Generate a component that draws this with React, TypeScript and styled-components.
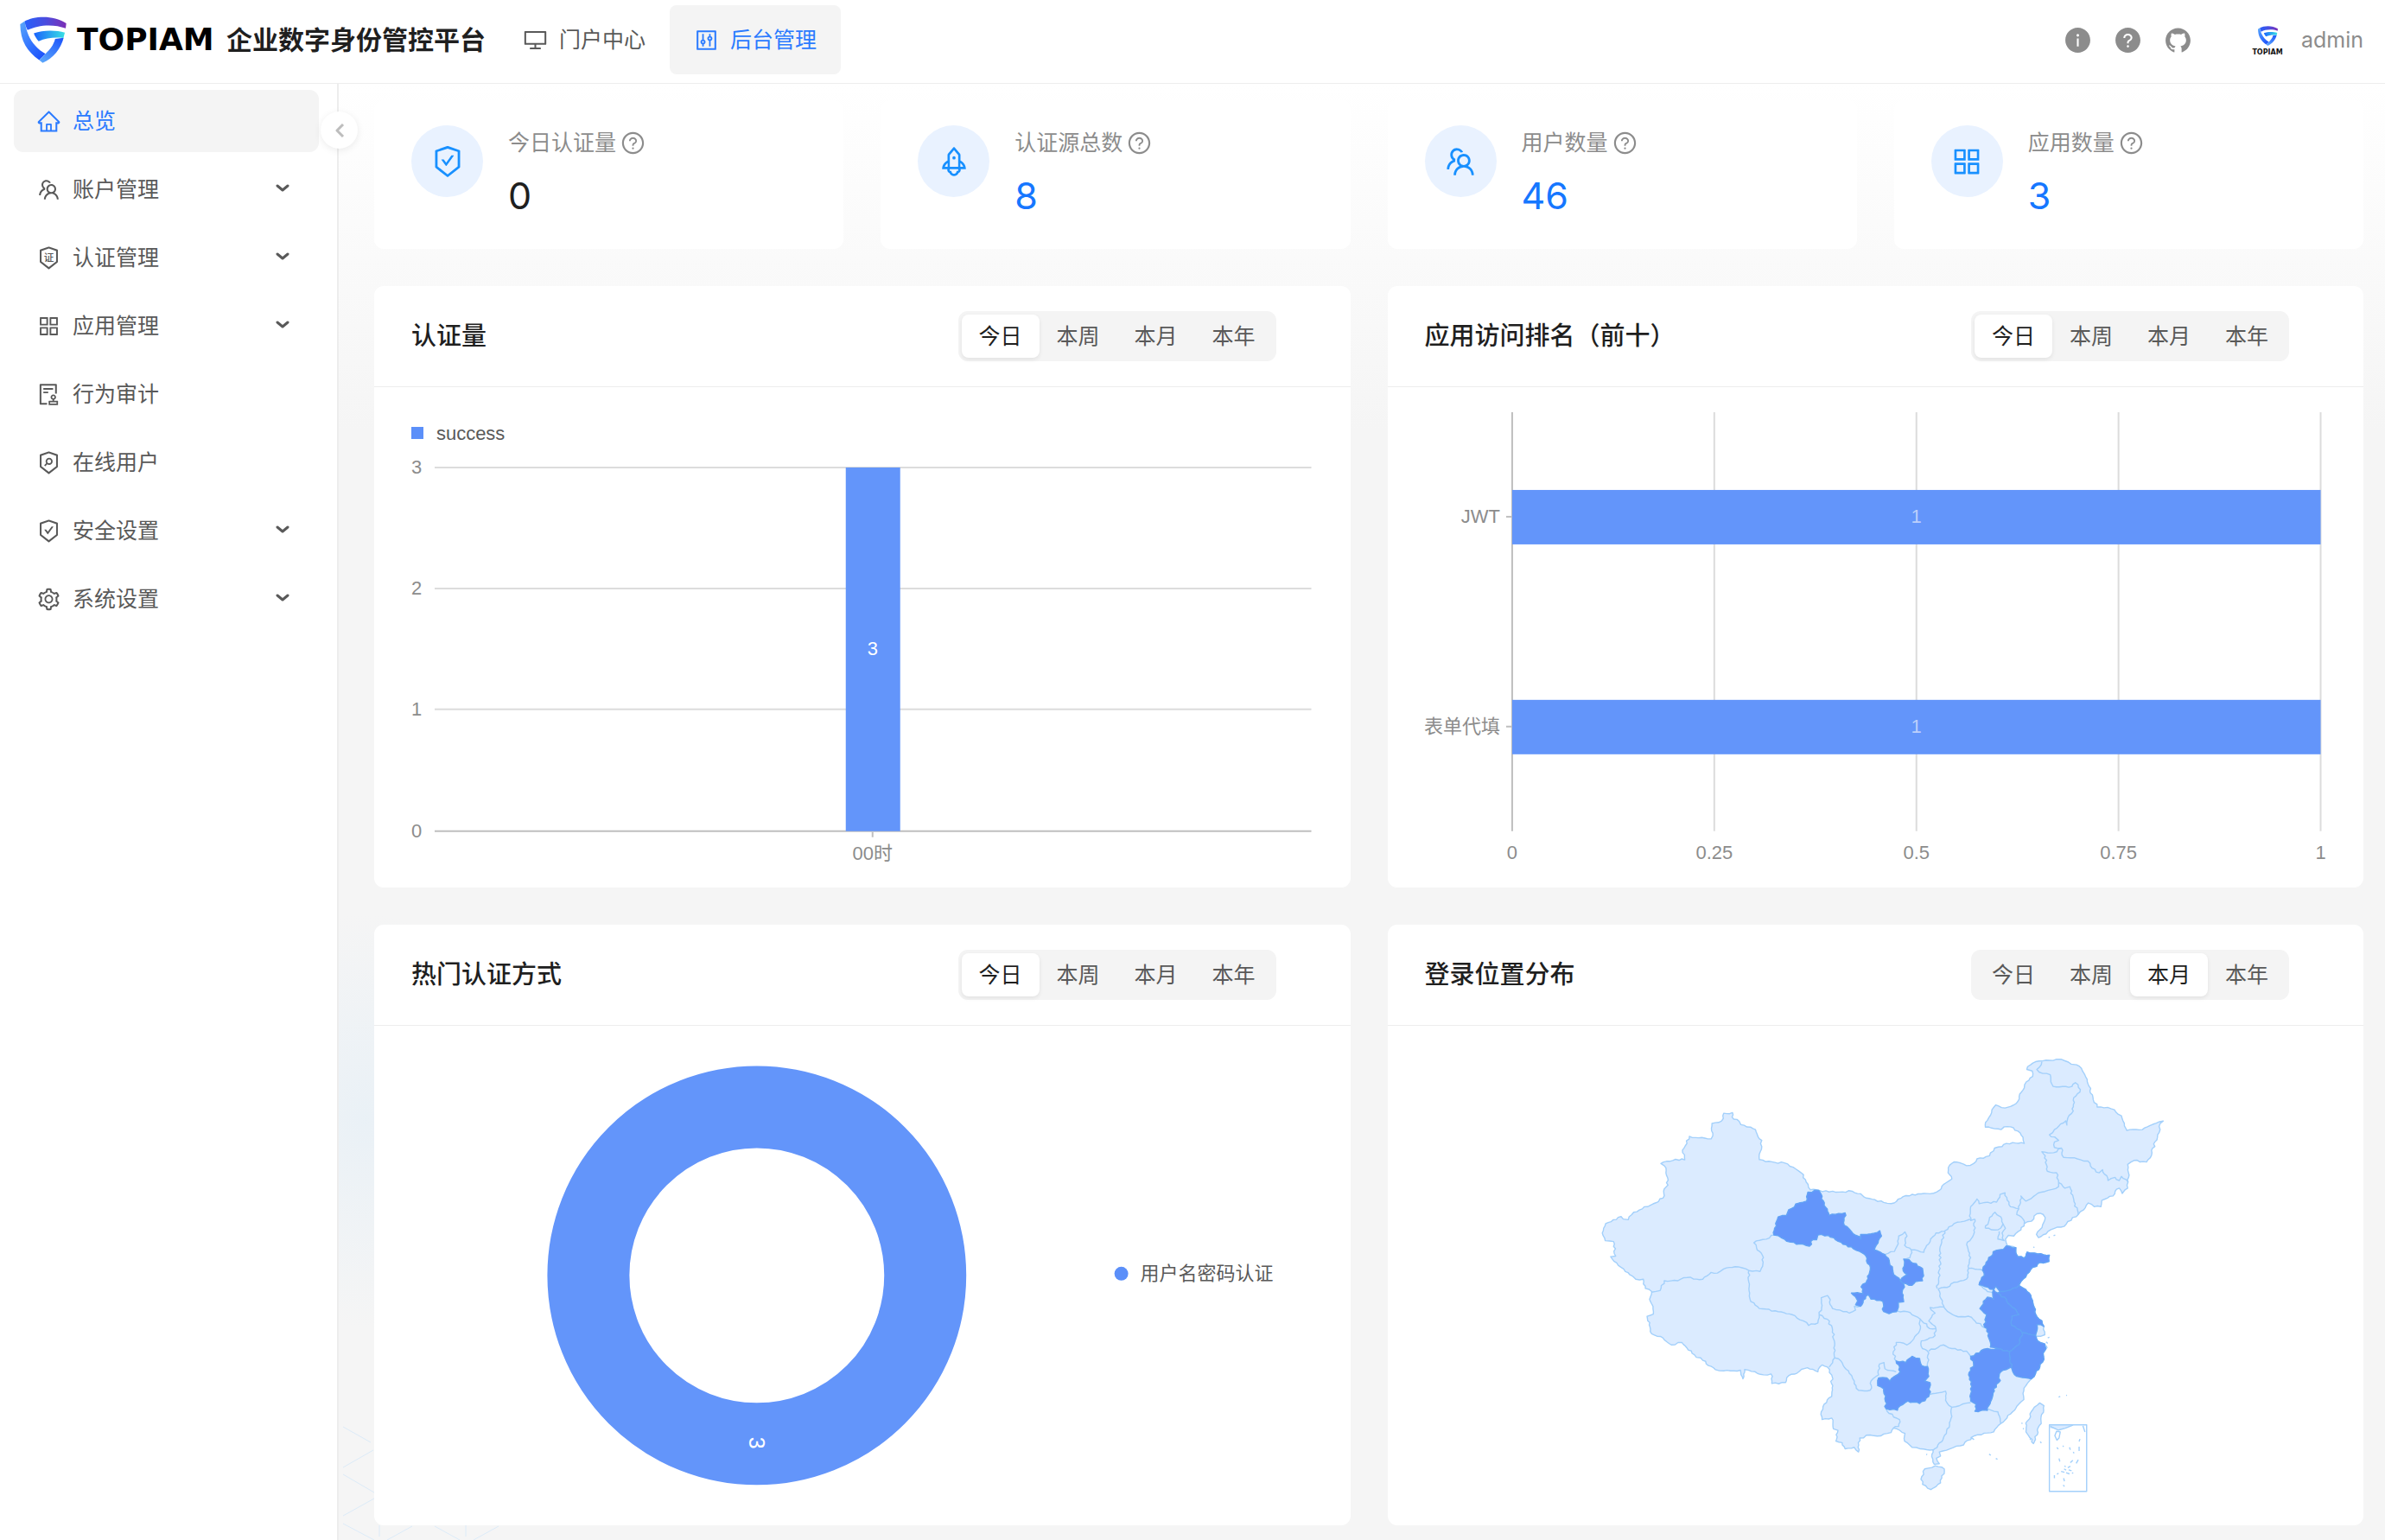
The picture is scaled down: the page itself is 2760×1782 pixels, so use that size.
import React, { useState } from 'react';
import styled, { createGlobalStyle } from 'styled-components';
import {
  AiFillGithub,
  AiFillInfoCircle,
  AiFillQuestionCircle,
  AiOutlineAppstore,
  AiOutlineAudit,
  AiOutlineControl,
  AiOutlineDesktop,
  AiOutlineHome,
  AiOutlineQuestionCircle,
  AiOutlineRocket,
  AiOutlineSafetyCertificate,
  AiOutlineSecurityScan,
  AiOutlineSetting,
  AiOutlineTeam,
} from 'react-icons/ai';

const color = {
  primary: '#2b7bff',
  number: '#1677ff',
  icon: '#1890ff',
  iconBg: '#e9f2ff',
  title: '#1f1f1f',
  text: '#595959',
  muted: '#8c8c8c',
  line: '#ededed',
  fill: '#f4f4f4',
  bar: '#6395fa',
  legend: '#5b8ff9',
  grid: '#dcdcdc',
  axis: '#bfbfbf',
};

const uiFont = `Inter, 'Noto Sans CJK SC', sans-serif`;
const chartFont = `'Liberation Sans', 'Noto Sans CJK SC', sans-serif`;

const GlobalStyle = createGlobalStyle`
  *, *::before, *::after { box-sizing: border-box; }
  body { margin: 0; background: #fff; font-family: ${uiFont}; color: ${color.title}; }
  button { font: inherit; border: 0; background: none; padding: 0; cursor: pointer; }
  a { text-decoration: none; color: inherit; }
  h1, h2, p, ul { margin: 0; padding: 0; }
  ul { list-style: none; }
  svg { display: block; flex: none; }
`;

/* ---------- shell ---------- */

const Page = styled.div`
  display: flex;
  flex-direction: column;
  min-height: 100vh;
`;

const Header = styled.header`
  display: flex;
  align-items: center;
  height: 97px;
  padding: 0 25px 4px 23px;
  border-bottom: 1px solid ${color.line};
  background: #fff;
`;

const Brand = styled.a`
  display: flex;
  align-items: center;
  margin-right: 15px;
`;

const Wordmark = styled.span`
  width: 172px;
  padding-left: 12px;
  font: 700 36px/48px 'DejaVu Sans', sans-serif;
  color: #000;
`;

const BrandTitle = styled.h1`
  padding-left: 13px;
  font-size: 30px;
  line-height: 48px;
  font-weight: 600;
  white-space: nowrap;
`;

const TopNav = styled.nav`
  display: flex;
  flex: 1;
`;

const TopLink = styled.a<{ $active?: boolean }>`
  display: flex;
  align-items: center;
  gap: 13px;
  height: 80px;
  padding: 0 28px;
  border-radius: 8px;
  font-size: 25px;
  line-height: 40px;
  white-space: nowrap;
  color: ${(p) => (p.$active ? color.primary : color.text)};
  background: ${(p) => (p.$active ? color.fill : 'transparent')};
`;

const Tools = styled.div`
  display: flex;
  align-items: center;
  gap: 25px;
  margin-right: 66px;
`;

const ToolButton = styled.button`
  color: ${color.muted};
`;

const Account = styled.button`
  display: flex;
  align-items: center;
  gap: 17px;
  font-size: 25px;
  line-height: 40px;
  color: ${color.muted};
`;

const Body = styled.div`
  display: flex;
  flex: 1;
`;

const Sidebar = styled.aside`
  position: relative;
  flex: none;
  width: 392px;
  padding: 7px 21px 0 16px;
  border-right: 2px solid ${color.line};
  background: #fff;
`;

const Menu = styled.ul`
  display: flex;
  flex-direction: column;
  gap: 7px;
`;

const MenuLink = styled.a<{ $active?: boolean }>`
  display: flex;
  align-items: center;
  gap: 13px;
  height: 72px;
  padding: 0 34px 0 26px;
  border-radius: 11px;
  font-size: 25px;
  line-height: 40px;
  color: ${(p) => (p.$active ? color.primary : color.text)};
  background: ${(p) => (p.$active ? color.fill : 'transparent')};
`;

const MenuLabel = styled.span`
  flex: 1;
`;

const Collapse = styled.button`
  position: absolute;
  z-index: 1;
  top: 32px;
  right: -24px;
  display: grid;
  place-items: center;
  width: 43px;
  height: 43px;
  border-radius: 50%;
  background: #fff;
  color: #bdbdbd;
  box-shadow: 0 2px 8px rgba(0, 0, 0, 0.08);
`;

const Main = styled.main`
  position: relative;
  flex: 1;
  min-width: 0;
  display: flex;
  flex-direction: column;
  gap: 43px;
  padding: 19px 25px 16px 41px;
  background:
    radial-gradient(ellipse 180px 240px at 30px 1200px, rgba(226, 238, 247, 0.6), rgba(226, 238, 247, 0) 100%),
    linear-gradient(180deg, #ffffff 0, #f5f5f5 400px);
`;

const Pattern = styled.svg`
  position: absolute;
  left: 0;
  bottom: 0;
`;

const Row = styled.section<{ $columns: number }>`
  position: relative;
  display: grid;
  grid-template-columns: repeat(${(p) => p.$columns}, minmax(0, 1fr));
  gap: 43px;
`;

/* ---------- cards ---------- */

const StatCard = styled.article`
  display: flex;
  gap: 29px;
  height: 172px;
  padding: 29px 43px;
  border-radius: 11px;
  background: #fff;
`;

const StatIcon = styled.div`
  display: grid;
  place-items: center;
  flex: none;
  width: 83px;
  height: 83px;
  border-radius: 50%;
  background: ${color.iconBg};
  color: ${color.icon};
`;

const StatTitle = styled.div`
  display: flex;
  align-items: center;
  gap: 5px;
  font-size: 25px;
  line-height: 40px;
  white-space: nowrap;
  color: ${color.muted};
`;

const StatValue = styled.p<{ $plain?: boolean }>`
  padding-top: 13px;
  font-size: 43px;
  line-height: 56px;
  color: ${(p) => (p.$plain ? color.title : color.number)};
`;

const ChartCard = styled.article`
  border-radius: 11px;
  background: #fff;
  overflow: hidden;
`;

const ChartHeader = styled.header`
  display: flex;
  align-items: center;
  justify-content: space-between;
  height: 117px;
  padding: 0 86px 0 43px;
  border-bottom: 1px solid ${color.line};
`;

const ChartTitle = styled.h2`
  font-size: 29px;
  line-height: 44px;
  font-weight: 500;
`;

const Segmented = styled.div`
  display: flex;
  padding: 4px;
  border-radius: 11px;
  background: ${color.fill};
`;

const Segment = styled.button<{ $active: boolean }>`
  width: 90px;
  height: 50px;
  border-radius: 8px;
  font-size: 25px;
  line-height: 50px;
  color: ${(p) => (p.$active ? color.title : color.text)};
  background: ${(p) => (p.$active ? '#fff' : 'transparent')};
  box-shadow: ${(p) => (p.$active ? '0 2px 5px rgba(0, 0, 0, 0.08)' : 'none')};
`;

const Chart = styled.svg`
  width: 100%;
  height: auto;
  font-family: ${chartFont};
  font-size: 22px;
  fill: ${color.muted};
`;

/* ---------- icons ---------- */

const Logo = ({ id, width, height }: { id: string; width: number; height: number }) => (
  <svg width={width} height={height} viewBox="68 56 164 162" aria-hidden="true">
    <defs>
      <linearGradient id={`${id}-top`} x1="0" x2="1">
        <stop offset="0" stopColor="#2860fb" />
        <stop offset="0.5" stopColor="#4a4ddf" />
        <stop offset="1" stopColor="#7d2fb5" />
      </linearGradient>
      <linearGradient id={`${id}-left`} x1="0" y1="0" x2="0.7" y2="1">
        <stop offset="0" stopColor="#5aa8fa" />
        <stop offset="0.5" stopColor="#3a7dff" />
        <stop offset="1" stopColor="#1f55fb" />
      </linearGradient>
      <linearGradient id={`${id}-right`} x1="0.8" y1="0" x2="0.2" y2="1">
        <stop offset="0" stopColor="#1f58fb" />
        <stop offset="1" stopColor="#5aa5fb" />
      </linearGradient>
      <linearGradient id={`${id}-mid`} x1="0" x2="1">
        <stop offset="0" stopColor="#1b62fd" />
        <stop offset="1" stopColor="#37e0e4" />
      </linearGradient>
    </defs>
    <path fill={`url(#${id}-left)`} d="M69 82 85 72C88 92 92 105 98 120C110 148 132 172 158 186L136 208C94 178 70 142 69 82Z" />
    <path fill={`url(#${id}-right)`} d="M192 134 222 130C212 168 186 202 148 218L136 208L158 186C174 172 186 156 192 134Z" />
    <path fill={`url(#${id}-top)`} d="M85 72C115 54 185 48 231 79L229 97C186 80 130 85 95 103C90 94 86 84 85 72Z" />
    <path fill={`url(#${id}-mid)`} d="M117 114C150 102 195 102 226 112L221 131C192 127 160 131 134 142C127 134 120 124 117 114Z" />
  </svg>
);

const Avatar = () => (
  <svg width="43" height="43" viewBox="0 0 43 43" aria-hidden="true">
    <svg x="9" y="5" width="25" height="23" viewBox="0 0 25 23">
      <Logo id="avatar" width={25} height={23} />
    </svg>
    <text x="21" y="38" textAnchor="middle" fontFamily="DejaVu Sans, sans-serif" fontSize="8" fontWeight="700" fill="#111">
      TOPIAM
    </text>
  </svg>
);

const CertIcon = () => (
  <svg width="29" height="29" viewBox="0 0 1024 1024" fill="currentColor" aria-hidden="true">
    <path d="M866.9 169.9L527.1 54.1C523 52.7 517.5 52 512 52s-11 .7-15.1 2.1L157.1 169.9c-8.3 2.8-15.1 12.4-15.1 21.2v482.4c0 8.8 5.7 20.4 12.6 25.9L499.3 968c3.5 2.7 8 4.1 12.6 4.1s9.2-1.4 12.6-4.1l344.7-268.6c6.9-5.4 12.6-17 12.6-25.9V191.1c.2-8.8-6.6-18.3-14.9-21.2zM810 654.3L512 886.5 214 654.3V226.7l298-101.6 298 101.6v427.6z" />
    <text x="512" y="632" textAnchor="middle" fontFamily="Noto Sans CJK SC, sans-serif" fontSize="410" fontWeight="500">
      证
    </text>
  </svg>
);

const ChevronDown = () => (
  <svg width="16" height="16" viewBox="0 0 16 16" aria-hidden="true">
    <path d="M2 4l6 5 6-5" fill="none" stroke="currentColor" strokeWidth="3" strokeLinecap="round" strokeLinejoin="round" />
  </svg>
);

const ChevronLeft = () => (
  <svg width="16" height="16" viewBox="0 0 16 16" aria-hidden="true">
    <path d="M12 1L5 8l7 7" fill="none" stroke="currentColor" strokeWidth="3" strokeLinejoin="round" />
  </svg>
);

/* ---------- charts ---------- */

const AuthBarChart = () => {
  const ticks = [3, 2, 1, 0];
  const left = 70;
  const right = 1085;
  const base = 514;
  const step = 140;
  return (
    <Chart viewBox="0 0 1130 579" role="img" aria-label="认证量">
      <rect x="43" y="46" width="14" height="14" fill={color.legend} />
      <text x="72" y="61" fill={color.text}>success</text>
      {ticks.map((t) => {
        const y = base - t * step - (t === 0 ? 0 : 1);
        return (
          <g key={t}>
            <text x="43" y={y + 7}>{t}</text>
            <path d={`M${left} ${y}H${right}`} stroke={t === 0 ? color.axis : color.grid} strokeWidth="2" />
          </g>
        );
      })}
      <rect x="546" y="93" width="63" height="421" fill={color.bar} />
      <path d="M577 515v6" stroke={color.axis} strokeWidth="2" />
      <text x="577" y="310" textAnchor="middle" fill="#fff">3</text>
      <text x="577" y="547" textAnchor="middle">00时</text>
    </Chart>
  );
};

const AppRankChart = () => {
  const left = 144;
  const width = 936;
  const ticks = [0, 0.25, 0.5, 0.75, 1];
  const rows = [
    { name: 'JWT', y: 150 },
    { name: '表单代填', y: 393 },
  ];
  return (
    <Chart viewBox="0 0 1130 579" role="img" aria-label="应用访问排名">
      {ticks.map((t) => (
        <g key={t}>
          <path d={`M${left + t * width} 29V514`} stroke={t === 0 ? color.axis : color.grid} strokeWidth="2" />
          <text x={left + t * width} y="546" textAnchor="middle">{t}</text>
        </g>
      ))}
      {rows.map((r) => (
        <g key={r.name}>
          <path d={`M${left - 7} ${r.y}h7`} stroke={color.axis} strokeWidth="2" />
          <rect x={left} y={r.y - 31} width={width} height="63" fill={color.bar} />
          <text x={left - 14} y={r.y + 7} textAnchor="end">{r.name}</text>
          <text x={left + width / 2} y={r.y + 7} textAnchor="middle" fill="#bccffb">1</text>
        </g>
      ))}
    </Chart>
  );
};

const AuthDonutChart = () => (
  <Chart viewBox="0 0 1130 579" role="img" aria-label="热门认证方式">
    <circle cx="443" cy="289" r="195" fill="none" stroke={color.bar} strokeWidth="95" />
    <text x="443" y="483" transform="rotate(90 443 483)" dy="9" textAnchor="middle" fontSize="25" fill="#fff">3</text>
    <circle cx="865" cy="287" r="8" fill={color.legend} />
    <text x="887" y="294" fill={color.text}>用户名密码认证</text>
  </Chart>
);

/* Bends every long segment at repeatable points so borders look like surveyed
   lines; neighbours that share a segment get the same bends. */
const survey = (src: string, closed: boolean) => {
  const pts = src.trim().split(/\s+/).map((p) => p.split(',').map(Number) as [number, number]);
  const noise = (n: number) => {
    const s = Math.sin(n * 12.9898) * 43758.5453;
    return (s - Math.floor(s)) * 2 - 1;
  };
  const out: string[] = [];
  const count = closed ? pts.length : pts.length - 1;
  for (let i = 0; i < count; i += 1) {
    const a = pts[i];
    const b = pts[(i + 1) % pts.length];
    out.push(`${a[0]} ${a[1]}`);
    const flip = a[0] > b[0] || (a[0] === b[0] && a[1] > b[1]);
    const [p, q] = flip ? [b, a] : [a, b];
    const dx = q[0] - p[0];
    const dy = q[1] - p[1];
    const len = Math.hypot(dx, dy);
    const parts = Math.floor(len / 7);
    const mids: string[] = [];
    for (let k = 1; k < parts; k += 1) {
      const t = k / parts;
      const d = noise(p[0] + p[1] * 3 + k * 7) * 3;
      mids.push(`${(p[0] + dx * t - (dy / len) * d).toFixed(1)} ${(p[1] + dy * t + (dx / len) * d).toFixed(1)}`);
    }
    if (flip) mids.reverse();
    out.push(...mids);
  }
  if (!closed) out.push(pts[pts.length - 1].join(' '));
  return `M${out.join('L')}${closed ? 'Z' : ''}`;
};

const land = [
  `400,247 421,245 424,266 437,273 441,284 464,292 476,300 480,315 491,335 491,355 485,380 485,397 500,404 545,408 566,422
   585,440 597,470 607,495 628,497 668,503 707,500 727,508 734,517 782,536 800,540 823,523 850,510 893,508 915,497 925,478
   945,460 936,440 940,415 950,405 980,417 997,410 1005,395 1020,393 1035,385 1047,360 1065,355 1075,345 1090,342 1118,345
   1115,325 1103,305 1085,291 1070,291 1063,300 1040,295 1025,292 1030,270 1040,245 1050,220 1072,230 1085,225 1103,208
   1107,185 1118,165 1123,145 1138,128 1137,110 1124,105 1133,90 1145,80 1170,75 1195,72 1215,77 1230,88 1243,90 1257,110
   1265,130 1273,160 1282,195 1292,227 1325,232 1350,255 1357,280 1363,303 1400,300 1425,283 1450,272 1440,290 1440,310
   1430,340 1423,375 1410,405 1380,400 1365,413 1367,440 1366,470 1365,490 1352,507 1345,490 1335,500 1330,515 1303,530
   1301,550 1285,550 1271,538 1260,560 1247,575 1222,598 1213,614 1190,620 1170,638 1152,650 1147,640 1155,625 1165,600
   1168,585 1163,575 1148,573 1135,597 1118,605 1110,625 1093,645 1080,643 1073,655 1077,675 1098,683 1103,712 1117,717
   1125,697 1150,703 1178,707 1177,727 1150,735 1130,762 1115,785 1105,805 1130,830 1140,870 1145,898 1160,920 1165,938
   1167,965 1148,970 1150,985 1167,995 1170,1010 1163,1025 1165,1045 1155,1070 1145,1090 1135,1108 1122,1130 1115,1155
   1117,1175 1105,1190 1090,1215 1062,1253 1045,1280 1000,1292 990,1305 965,1325 940,1335 915,1345 918,1358 908,1365
   915,1383 903,1385 897,1360 900,1338 870,1335 850,1330 832,1310 833,1285 805,1268 800,1282 775,1293 750,1290 725,1300
   722,1345 712,1330 690,1335 683,1315 668,1310 673,1275 662,1270 658,1235 635,1240 633,1215 640,1190 658,1165 658,1095
   648,1070 635,1063 625,1085 600,1072 555,1098 548,1120 515,1123 513,1092 495,1095 475,1085 450,1078 446,1108 440,1080
   400,1082 380,1078 350,1048 330,1030 300,990 275,998 255,975 228,962 224,940 217,905 232,898 228,865 223,850 228,825
   213,815 208,785 190,785 165,760 148,740 130,712 142,710 137,663 117,660 110,635 118,605 155,582 160,590 172,592
   185,568 225,545 255,522 258,492 267,480 262,440 258,417 250,410 300,395 307,398 302,375 318,322 370,330 374,320
   372,280 395,272 398,255`,
  `880,1400 905,1390 927,1400 918,1445 895,1467 875,1450 873,1425`,
  `1155,1186 1165,1195 1158,1245 1140,1318 1122,1280 1125,1245 1142,1200`,
];

const borders = [
  `522,642 472,667 480,690 495,715 490,750 487,760 460,757`,
  `460,757 435,745 400,752 385,765 370,763 350,785 305,780 290,790 258,790 248,822 228,827`,
  `460,757 462,830 463,850 485,880 530,890 570,903 590,920 603,935 625,927 628,900`,
  `628,900 648,915 660,950 665,1000 665,1040 652,1070`,
  `628,900 635,870 633,845 648,838 660,880 685,890 700,895 715,885 712,873 727,872`,
  `785,705 808,695 817,670 818,645 833,632 838,645 832,675 848,690 845,715 830,722`,
  `848,690 878,698 890,670 907,635 928,630`,
  `928,628 917,680 917,750 910,815`,
  `928,628 950,605 975,597 990,590`,
  `1000,590 997,640 982,665 990,715 985,750`,
  `1000,590 990,595 990,550 1005,525 1010,540 1052,535 1060,510 1072,505 1085,550 1105,557`,
  `1105,557 1100,575 1115,590 1118,605`,
  `1105,557 1110,515 1122,532 1145,512 1175,497 1200,485 1200,472`,
  `1200,472 1215,490 1227,485 1235,520 1247,575`,
  `1200,472 1195,440 1173,435 1168,385 1160,372 1188,375 1207,360`,
  `1207,360 1212,390 1245,395 1270,402 1280,425 1297,440 1305,430 1318,465 1335,455 1345,465 1350,452 1366,470`,
  `1207,360 1190,358 1190,340 1200,335 1178,317 1190,300 1217,272 1220,285 1222,262 1235,240 1235,205 1252,170 1240,148 1232,160 1187,160 1180,122 1162,118 1148,105 1160,80`,
  `985,750 1020,757`,
  `985,750 980,785 950,795 940,808 912,817`,
  `1025,620 1035,585 1048,568 1062,583 1067,605 1055,625 1025,620`,
  `1067,605 1073,620 1065,635 1070,660 1055,655 1058,630`,
  `912,817 925,870 935,890 960,907 985,905 1000,920 1023,942`,
  `1010,803 1030,825 1045,830`,
  `925,875 893,877 905,895 890,920 907,945`,
  `815,888 845,893 870,915 870,945 850,985 838,998 812,990 805,1020 812,1050`,
  `870,915 885,930 892,945 907,945 905,968 872,985 875,1010 890,1025 887,1068`,
  `890,1018 925,998 945,1010 980,1018 990,1035`,
  `890,1160 930,1148 933,1185 945,1200 970,1190 990,1185`,
  `945,1200 945,1230 932,1285 910,1330 900,1340`,
  `1030,1205 1055,1215 1062,1253`,
  `665,1040 680,1050 700,1090 712,1115 722,1145 750,1145 752,1115 770,1095 772,1060 783,1055 785,1075 812,1085`,
  `788,1205 795,1220 820,1240 818,1262 805,1268`,
  `1148,932 1145,967`,
];

const active = [
  `601,503 627,497 640,545 652,578 690,570 688,610 705,630 728,655 727,640 752,638 773,628 777,645 760,690 785,705
   803,745 806,770 822,790 832,810 826,830 830,858 817,860 813,890 795,897 782,890 780,857 752,850 745,835 727,873
   715,868 720,855 705,830 733,832 728,810 740,797 750,755 740,710 725,695 705,680 685,672 650,643 625,642 622,657
   613,657 605,678 560,665 537,650 520,642 530,583 550,578 555,560 580,538 598,532`,
  `830,720 843,722 875,750 875,790 858,793 850,805 828,798 822,790 838,770 828,750`,
  `1075,677 1098,683 1103,712 1117,717 1125,697 1150,703 1178,707 1177,727 1150,735 1130,762 1115,785 1105,805
   1085,820 1060,825 1050,808 1045,818 1010,803 1022,765 1020,745 1033,715 1050,692 1068,688`,
  `1105,805 1130,830 1140,870 1145,898 1160,920 1165,938 1148,932 1145,967 1113,958 1088,935 1088,905 1105,900
   1085,870 1075,850 1055,830 1060,825 1085,820`,
  `1045,818 1055,830 1075,850 1085,870 1105,900 1088,905 1088,935 1113,958 1108,990 1083,1020 1055,1010 1037,1005
   1033,960 1023,940 1028,900 1012,880 1030,843 1045,850`,
  `1113,958 1145,967 1150,985 1167,995 1170,1010 1163,1025 1165,1045 1155,1070 1145,1090 1135,1108 1100,1100
   1087,1070 1083,1020 1108,990`,
  `990,1035 1030,1010 1055,1010 1083,1020 1087,1070 1062,1085 1057,1120 1045,1140 1040,1175 1030,1210 1000,1213
   1003,1190 990,1180 990,1125 985,1095 997,1060`,
  `812,1050 835,1055 850,1035 868,1042 873,1065 887,1068 890,1100 880,1115 893,1120 890,1165 868,1188 840,1180
   822,1195 815,1210 788,1205 785,1172 782,1140 768,1130 770,1105 790,1105 797,1115 808,1100 822,1085`,
];

const islets = `M1188 644l4-2M1176 650l3-2M1140 680l2 3M1174 975l4-2M1170 988l4 5M1170 1000l3 8M1200 1167l4-2M1218 1161l2 1
  M1112 1250l1 4M1156 1312l3 4M1034 1352l4 4M1050 1366l4 3M884 1352l2 2M990 1297l8 8M1132 1302l1 4M1115 1268l2 3`;
const inset = `M1180 1262l20 12l16-6l18-10M1191 1292l4-14l9 2l-3 20l-5 7zM1258 1260l5 20M1251 1303l-2 8M1249 1328v14M1247 1370l-5 12
  M1196 1330l3 6M1210 1325l2 3M1226 1330l2 8M1201 1366l2 10M1228 1380l6-8M1213 1400l5 4M1206 1408l8 3M1222 1396l6-5M1218 1412l8 4
  M1224 1403l7 3M1190 1420v10M1212 1430l2 10M1211 1452l3 5M1235 1345l2 4M1196 1417l4-3M1232 1412l3 2M1214 1390l3 3`;

const LocationMap = () => (
  <Chart viewBox="0 0 1130 579" role="img" aria-label="登录位置分布">
    <g transform="translate(195 13) scale(0.48469 0.35714)" stroke="#a3d0fb" strokeWidth="1.4" strokeLinejoin="round" fill="none">
      {land.map((d) => (
        <path key={d} d={survey(d, true)} fill="#dbebff" vectorEffect="non-scaling-stroke" />
      ))}
      {borders.map((d) => (
        <path key={d} d={survey(d, false)} vectorEffect="non-scaling-stroke" />
      ))}
      {active.map((d) => (
        <path key={d} d={survey(d, true)} fill={color.bar} stroke="#62a3f5" vectorEffect="non-scaling-stroke" />
      ))}
      <path d={islets} vectorEffect="non-scaling-stroke" />
      <path d="M1178 1257H1240L1205 1272L1180 1268Z" fill="#dbebff" stroke="none" />
      <path d={inset} vectorEffect="non-scaling-stroke" />
      <rect x="1178" y="1257" width="89" height="216" vectorEffect="non-scaling-stroke" />
    </g>
  </Chart>
);

/* ---------- page ---------- */

const ranges = ['今日', '本周', '本月', '本年'];

const menu = [
  { label: '总览', icon: <AiOutlineHome size={29} />, active: true },
  { label: '账户管理', icon: <AiOutlineTeam size={29} />, nested: true },
  { label: '认证管理', icon: <CertIcon />, nested: true },
  { label: '应用管理', icon: <AiOutlineAppstore size={29} />, nested: true },
  { label: '行为审计', icon: <AiOutlineAudit size={29} /> },
  { label: '在线用户', icon: <AiOutlineSecurityScan size={29} /> },
  { label: '安全设置', icon: <AiOutlineSafetyCertificate size={29} />, nested: true },
  { label: '系统设置', icon: <AiOutlineSetting size={29} />, nested: true },
];

const stats = [
  { label: '今日认证量', value: 0, icon: <AiOutlineSafetyCertificate size={40} /> },
  { label: '认证源总数', value: 8, icon: <AiOutlineRocket size={40} /> },
  { label: '用户数量', value: 46, icon: <AiOutlineTeam size={40} /> },
  { label: '应用数量', value: 3, icon: <AiOutlineAppstore size={40} /> },
];

type PanelProps = { title: string; initial?: string; children: React.ReactNode };

const Panel = ({ title, initial = '今日', children }: PanelProps) => {
  const [range, setRange] = useState(initial);
  return (
    <ChartCard>
      <ChartHeader>
        <ChartTitle>{title}</ChartTitle>
        <Segmented role="group" aria-label={title}>
          {ranges.map((r) => (
            <Segment key={r} type="button" $active={r === range} aria-pressed={r === range} onClick={() => setRange(r)}>
              {r}
            </Segment>
          ))}
        </Segmented>
      </ChartHeader>
      {children}
    </ChartCard>
  );
};

export default function App() {
  return (
    <Page>
      <GlobalStyle />
      <Header>
        <Brand href="#home">
          <Logo id="brand" width={54} height={54} />
          <Wordmark>TOPIAM</Wordmark>
          <BrandTitle>企业数字身份管控平台</BrandTitle>
        </Brand>
        <TopNav>
          <TopLink href="#portal">
            <AiOutlineDesktop size={29} />
            门户中心
          </TopLink>
          <TopLink href="#console" $active>
            <AiOutlineControl size={29} />
            后台管理
          </TopLink>
        </TopNav>
        <Tools>
          <ToolButton type="button" aria-label="关于"><AiFillInfoCircle size={33} /></ToolButton>
          <ToolButton type="button" aria-label="帮助"><AiFillQuestionCircle size={33} /></ToolButton>
          <ToolButton type="button" aria-label="GitHub"><AiFillGithub size={33} /></ToolButton>
        </Tools>
        <Account type="button">
          <Avatar />
          admin
        </Account>
      </Header>
      <Body>
        <Sidebar>
          <nav>
            <Menu>
              {menu.map((m) => (
                <li key={m.label}>
                  <MenuLink href={`#${m.label}`} $active={m.active}>
                    {m.icon}
                    <MenuLabel>{m.label}</MenuLabel>
                    {m.nested && <ChevronDown />}
                  </MenuLink>
                </li>
              ))}
            </Menu>
          </nav>
          <Collapse type="button" aria-label="收起菜单">
            <ChevronLeft />
          </Collapse>
        </Sidebar>
        <Main>
          <Pattern width="200" height="140" viewBox="0 0 200 140" fill="none" stroke="#dcebf8" strokeWidth="1" aria-hidden="true">
            <path d="M5 9l32 18M5 56l35-20M5 64l36 21M5 112l36-20M5 121l36 19M47 123v13M56 140l29-16M111 124l29 16M147 123v13M156 140l29-16" />
          </Pattern>
          <Row $columns={4}>
            {stats.map((s) => (
              <StatCard key={s.label}>
                <StatIcon>{s.icon}</StatIcon>
                <div>
                  <StatTitle>
                    {s.label}
                    <AiOutlineQuestionCircle size={29} />
                  </StatTitle>
                  <StatValue $plain={s.value === 0}>{s.value}</StatValue>
                </div>
              </StatCard>
            ))}
          </Row>
          <Row $columns={2}>
            <Panel title="认证量"><AuthBarChart /></Panel>
            <Panel title="应用访问排名（前十）"><AppRankChart /></Panel>
          </Row>
          <Row $columns={2}>
            <Panel title="热门认证方式"><AuthDonutChart /></Panel>
            <Panel title="登录位置分布" initial="本月"><LocationMap /></Panel>
          </Row>
        </Main>
      </Body>
    </Page>
  );
}
